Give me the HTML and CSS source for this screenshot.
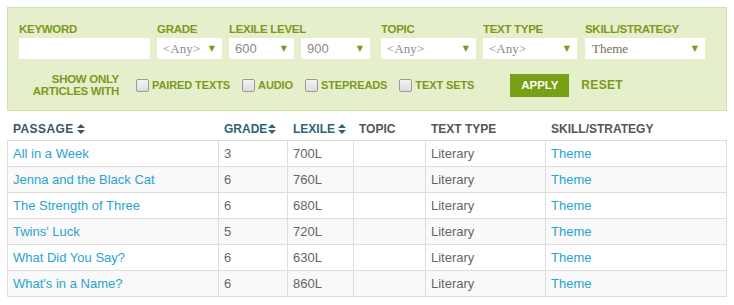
FILE: index.html
```html
<!DOCTYPE html>
<html>
<head>
<meta charset="utf-8">
<link rel="stylesheet" href="styles.css">
</head>
<body>
<div class="panel">
  <div class="fields">
    <div class="field f-keyword">
      <div class="lbl">KEYWORD</div>
      <div class="input"></div>
    </div>
    <div class="field f-grade">
      <div class="lbl">GRADE</div>
      <div class="sel serif"><span>&lt;Any&gt;</span><span class="arr">▼</span></div>
    </div>
    <div class="field f-lexile">
      <div class="lbl">LEXILE LEVEL</div>
      <div class="pair">
        <div class="sel s-lo"><span>600</span><span class="arr">▼</span></div>
        <div class="sel s-hi"><span>900</span><span class="arr">▼</span></div>
      </div>
    </div>
    <div class="field f-topic">
      <div class="lbl">TOPIC</div>
      <div class="sel serif"><span>&lt;Any&gt;</span><span class="arr">▼</span></div>
    </div>
    <div class="field f-type">
      <div class="lbl">TEXT TYPE</div>
      <div class="sel serif"><span>&lt;Any&gt;</span><span class="arr">▼</span></div>
    </div>
    <div class="field f-skill">
      <div class="lbl">SKILL/STRATEGY</div>
      <div class="sel serif dark"><span>Theme</span><span class="arr">▼</span></div>
    </div>
  </div>
  <div class="opts">
    <div class="show">SHOW ONLY<br>ARTICLES WITH</div>
    <label class="chk"><span class="box"></span>PAIRED TEXTS</label>
    <label class="chk"><span class="box"></span>AUDIO</label>
    <label class="chk"><span class="box"></span>STEPREADS</label>
    <label class="chk"><span class="box"></span>TEXT SETS</label>
    <span class="apply">APPLY</span>
    <span class="reset">RESET</span>
  </div>
</div>

<div class="table">
  <div class="thead">
    <div class="th c1 sort">PASSAGE <svg class="si" viewBox="0 0 8 10" width="8" height="10"><path d="M4 0L8 4H0Z M0 6H8L4 10Z"/></svg></div>
    <div class="th c2 sort">GRADE<svg class="si" viewBox="0 0 8 10" width="8" height="10"><path d="M4 0L8 4H0Z M0 6H8L4 10Z"/></svg></div>
    <div class="th c3 sort">LEXILE <svg class="si" viewBox="0 0 8 10" width="8" height="10"><path d="M4 0L8 4H0Z M0 6H8L4 10Z"/></svg></div>
    <div class="th c4">TOPIC</div>
    <div class="th c5">TEXT TYPE</div>
    <div class="th c6">SKILL/STRATEGY</div>
  </div>
  <div class="row"><div class="td c1 link">All in a Week</div><div class="td c2">3</div><div class="td c3">700L</div><div class="td c4"></div><div class="td c5">Literary</div><div class="td c6 link">Theme</div></div>
  <div class="row alt"><div class="td c1 link">Jenna and the Black Cat</div><div class="td c2">6</div><div class="td c3">760L</div><div class="td c4"></div><div class="td c5">Literary</div><div class="td c6 link">Theme</div></div>
  <div class="row"><div class="td c1 link">The Strength of Three</div><div class="td c2">6</div><div class="td c3">680L</div><div class="td c4"></div><div class="td c5">Literary</div><div class="td c6 link">Theme</div></div>
  <div class="row alt"><div class="td c1 link">Twins' Luck</div><div class="td c2">5</div><div class="td c3">720L</div><div class="td c4"></div><div class="td c5">Literary</div><div class="td c6 link">Theme</div></div>
  <div class="row"><div class="td c1 link">What Did You Say?</div><div class="td c2">6</div><div class="td c3">630L</div><div class="td c4"></div><div class="td c5">Literary</div><div class="td c6 link">Theme</div></div>
  <div class="row alt"><div class="td c1 link">What's in a Name?</div><div class="td c2">6</div><div class="td c3">860L</div><div class="td c4"></div><div class="td c5">Literary</div><div class="td c6 link">Theme</div></div>
</div>
</body>
</html>
```

FILE: styles.css
```css
* { box-sizing: border-box; }
body {
  margin: 0;
  padding: 7px 0 0 7px;
  background: #fff;
  font-family: "Liberation Sans", Arial, sans-serif;
  width: 734px;
}
.panel {
  width: 720px;
  height: 104px;
  background: #e6efcb;
  border: 1px solid #d3dfae;
  padding: 14px 0 0 11px;
}
.fields {
  display: flex;
  align-items: flex-start;
}
.field { display: flex; flex-direction: column; }
.lbl {
  color: #7a9a1c;
  font-weight: bold;
  font-size: 11.5px;
  letter-spacing: -0.3px;
  height: 16px;
  line-height: 14px;
}
.input {
  width: 131px;
  height: 21px;
  background: #fff;
}
.f-keyword { margin-right: 7px; }
.f-grade { margin-right: 7px; }
.f-lexile { margin-right: 11px; }
.f-topic { margin-right: 7px; }
.f-type { margin-right: 8px; }
.pair { display: flex; gap: 7px; }
.sel {
  height: 21px;
  background: #fff;
  display: flex;
  align-items: center;
  justify-content: space-between;
  padding: 0 7px 0 6px;
  color: #8a8a8a;
  font-size: 13px;
}
.sel.serif { font-family: "Liberation Serif", "Times New Roman", serif; }
.sel.dark { color: #6f7060; padding-left: 7px; }
.arr { color: #7a9a1c; font-size: 8px; font-family: "DejaVu Sans", sans-serif; }
.f-grade .sel { width: 65px; }
.s-lo { width: 65px; }
.s-hi { width: 69px; }
.f-topic .sel { width: 95px; }
.f-type .sel { width: 94px; }
.f-skill .sel { width: 120px; }

.opts {
  display: flex;
  align-items: center;
  margin-top: 14px;
  height: 24px;
}
.show {
  width: 100px;
  text-align: right;
  color: #7a9a1c;
  font-weight: bold;
  font-size: 11.5px;
  line-height: 12px;
  letter-spacing: -0.3px;
  margin-right: 17px;
}
.chk {
  display: flex;
  align-items: center;
  color: #7a9a1c;
  font-weight: bold;
  font-size: 11px;
  letter-spacing: -0.1px;
  margin-right: 12px;
}
.box {
  width: 13px;
  height: 13px;
  border: 1px solid #9a9a9a;
  border-radius: 2px;
  background: linear-gradient(#f4f4f4, #dcdcdc);
  margin-right: 3px;
}
.apply {
  margin-left: 24px;
  width: 59px;
  height: 23px;
  background: #78a014;
  color: #fff;
  font-weight: bold;
  font-size: 11.5px;
  display: flex;
  align-items: center;
  justify-content: center;
}
.reset {
  margin-left: 12px;
  color: #7a9a1c;
  font-weight: bold;
  font-size: 12px;
  letter-spacing: 0.3px;
}

.table {
  width: 720px;
  margin-top: 6px;
}
.thead {
  display: flex;
  height: 23px;
  align-items: center;
}
.th {
  font-size: 12px;
  font-weight: bold;
  color: #555;
  padding-left: 6px;
  display: flex;
  align-items: center;
}
.th.sort { color: #2f6478; }
.th.c1 { color: #3c5668; letter-spacing: 0.4px; }
.si { fill: currentColor; margin-left: 3px; }
.th.c2 .si { margin-left: 1px; }
.row {
  display: flex;
  height: 26px;
  border-top: 1px solid #ddd;
  border-left: 1px solid #ddd;
  border-right: 1px solid #ddd;
  align-items: stretch;
}
.row:last-child { border-bottom: 1px solid #ddd; height: 27px; }
.row.alt { background: #f9f9f9; }
.td {
  font-size: 13px;
  color: #666;
  padding-left: 5px;
  display: flex;
  align-items: center;
  border-right: 1px solid #ddd;
}
.td.c6 { border-right: none; }
.td.link { color: #2aa3cf; }
.c1 { width: 211px; }
.c2 { width: 69px; }
.c3 { width: 66px; }
.c4 { width: 72px; }
.c5 { width: 120px; }
.c6 { flex: 1; }
```
